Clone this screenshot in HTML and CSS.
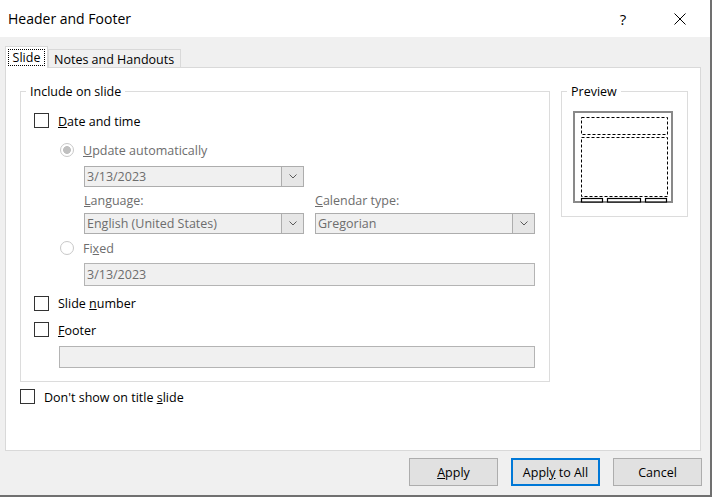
FILE: index.html
```html
<!DOCTYPE html>
<html>
<head>
<meta charset="utf-8">
<title>Header and Footer</title>
<link rel="stylesheet" href="styles.css">
</head>
<body>
<div class="window">
  <div class="titlebar">
    <span class="title">Header and Footer</span>
    <span class="help">?</span>
    <svg class="close" width="12" height="12" viewBox="0 0 12 12"><path d="M0.5 0.5 L11.5 11.5 M11.5 0.5 L0.5 11.5" stroke="#000" stroke-width="1" fill="none"/></svg>
  </div>
  <div class="client">
    <div class="tabs">
      <div class="tab active"><span class="focus">Slide</span></div>
      <div class="tab">Notes and Handouts</div>
    </div>
    <div class="panel">
      <div class="main">
        <div class="group include">
          <span class="legend">Include on slide</span>
          <div class="row r-date"><span class="check"></span><span class="lbl"><u>D</u>ate and time</span></div>
          <div class="row r-update dis"><span class="radio on"></span><span class="lbl"><u>U</u>pdate automatically</span></div>
          <div class="combo combo1"><span class="val">3/13/2023</span><span class="btn"><svg width="8" height="5" viewBox="0 0 8 5"><path d="M0.5 0.5 L4 4 L7.5 0.5" stroke="#5a5a5a" fill="none"/></svg></span></div>
          <div class="row labels dis"><span class="lab-lang"><u>L</u>anguage:</span><span><u>C</u>alendar type:</span></div>
          <div class="row combos">
            <div class="combo"><span class="val">English (United States)</span><span class="btn"><svg width="8" height="5" viewBox="0 0 8 5"><path d="M0.5 0.5 L4 4 L7.5 0.5" stroke="#5a5a5a" fill="none"/></svg></span></div>
            <div class="combo"><span class="val">Gregorian</span><span class="btn"><svg width="8" height="5" viewBox="0 0 8 5"><path d="M0.5 0.5 L4 4 L7.5 0.5" stroke="#5a5a5a" fill="none"/></svg></span></div>
          </div>
          <div class="row r-fixed dis"><span class="radio"></span><span class="lbl">Fi<u>x</u>ed</span></div>
          <div class="field field-fixed">3/13/2023</div>
          <div class="row r-slidenum"><span class="check"></span><span class="lbl">Slide <u>n</u>umber</span></div>
          <div class="row r-footer"><span class="check"></span><span class="lbl"><u>F</u>ooter</span></div>
          <div class="field field-footer"></div>
        </div>
        <div class="row r-dont"><span class="check"></span><span class="lbl">Don't show on title <u>s</u>lide</span></div>
      </div>
      <div class="group preview">
        <span class="legend">Preview</span>
        <svg class="thumb" width="100" height="92" viewBox="0 0 100 92">
          <rect x="1" y="1" width="98" height="90" fill="#fff" stroke="#898989" stroke-width="2"/>
          <rect x="8.5" y="6.5" width="86" height="17" fill="none" stroke="#000" stroke-width="1" stroke-dasharray="3 2"/>
          <rect x="8.5" y="26.5" width="86" height="59" fill="none" stroke="#000" stroke-width="1" stroke-dasharray="3 2"/>
          <rect x="8.5" y="87.5" width="21" height="3.5" fill="#fff" stroke="#000" stroke-width="1.2"/>
          <rect x="34.5" y="87.5" width="33" height="3.5" fill="#fff" stroke="#000" stroke-width="1.2"/>
          <rect x="72.5" y="87.5" width="21" height="3.5" fill="#fff" stroke="#000" stroke-width="1.2"/>
        </svg>
      </div>
    </div>
    <div class="buttons">
      <div class="button"><span><u>A</u>pply</span></div>
      <div class="button default"><span>Appl<u>y</u> to All</span></div>
      <div class="button"><span>Cancel</span></div>
    </div>
  </div>
</div>
</body>
</html>
```
FILE: styles.css
```css
* { box-sizing: border-box; margin: 0; padding: 0; }
html, body { width: 712px; height: 497px; overflow: hidden; }
body {
  font-family: "Open Sans", "Noto Sans", sans-serif;
  font-size: 12.5px;
  color: #000;
  background: #fff;
}
u { text-decoration: underline; text-underline-offset: 1px; }

.window {
  width: 712px;
  height: 497px;
  border-right: 2px solid #707070;
  border-bottom: 2px solid #707070;
  display: flex;
  flex-direction: column;
}

.titlebar {
  height: 37px;
  flex: none;
  display: flex;
  align-items: center;
  padding-left: 8px;
  background: #fff;
}
.title { font-size: 14px; flex: 1; }
.help { font-size: 15px; width: 12px; text-align: center; margin-right: 45px; }
.close { margin-right: 24px; display: block; }

.client {
  flex: 1;
  background: #f0f0f0;
  padding: 9px 0 0 5px;
  display: flex;
  flex-direction: column;
}

.tabs {
  height: 21px;
  display: flex;
  align-items: flex-end;
}
.tab {
  height: 18px;
  width: 133px;
  border: 1px solid #d9d9d9;
  border-bottom: none;
  background: #f0f0f0;
  padding-left: 5px;
  line-height: 19px;
}
.tab.active {
  position: relative;
  z-index: 1;
  width: 43px;
  height: 22px;
  margin-bottom: -1px;
  background: #fff;
  padding: 2px 0 0 2px;
}
.focus {
  display: block;
  width: 37px;
  height: 17px;
  border: 1px dotted #000;
  text-align: center;
  line-height: 15px;
}

.panel {
  width: 696px;
  height: 384px;
  border: 1px solid #d9d9d9;
  background: #fff;
  display: flex;
  padding: 23px 0 0 14px;
}

.main { width: 530px; display: flex; flex-direction: column; }

.group {
  border: 1px solid #dcdcdc;
  display: flex;
  flex-direction: column;
}
.include { height: 291px; }
.preview { width: 127px; height: 126px; margin-left: 11px; }

.legend {
  align-self: flex-start;
  margin: -9px 0 0 5px;
  padding: 0 4px;
  height: 16px;
  line-height: 17px;
  background: #fff;
}

.row { display: flex; align-items: center; }
.lbl { padding-top: 1px; }
.dis { color: #6d6d6d; }

.check {
  width: 15px;
  height: 15px;
  flex: none;
  border: 1px solid #333;
  background: #fff;
  margin-right: 9px;
}
.radio {
  width: 14px;
  height: 14px;
  flex: none;
  border: 1px solid #c8c8c8;
  border-radius: 50%;
  background: #fff;
  margin-right: 9px;
}
.radio.on { background: radial-gradient(circle, #c0c0c0 0 3.6px, #fff 4.2px); }

.r-date { margin: 12px 0 0 13px; height: 19px; }
.r-update { margin: 11px 0 0 39px; height: 18px; }
.combo1 { margin: 7px 0 0 63px; }
.labels { margin: 5px 0 0 63px; height: 16px; padding-top: 1px; }
.lab-lang { width: 231px; }
.combos { margin: 5px 0 0 63px; gap: 11px; }
.r-fixed { margin: 5px 0 0 39px; height: 18px; }
.field-fixed { margin: 6px 0 0 63px; width: 451px; height: 23px; }
.r-slidenum { margin: 8px 0 0 13px; height: 18px; }
.r-footer { margin: 8px 0 0 13px; height: 19px; }
.field-footer { margin: 7px 0 0 38px; width: 476px; height: 22px; }
.r-dont { margin-top: 5px; height: 19px; }

.combo {
  width: 220px;
  height: 21px;
  display: flex;
  border: 1px solid #adadad;
  background: #f0f0f0;
  color: #6d6d6d;
}
.combo .val { flex: 1; padding-left: 2px; line-height: 20px; }
.combo .btn {
  width: 22px;
  border-left: 1px solid #adadad;
  background: #e6e6e6;
  display: flex;
  align-items: center;
  justify-content: center;
}
.combo .btn svg { display: block; }

.field {
  border: 1px solid #b4b4b4;
  background: #f0f0f0;
  color: #6d6d6d;
  padding-left: 2px;
  line-height: 22px;
}

.thumb { display: block; margin: 12px 0 0 11px; }

.buttons {
  display: flex;
  justify-content: flex-end;
  gap: 13px;
  margin-top: 7px;
  padding-right: 8px;
}
.button {
  width: 89px;
  height: 28px;
  border: 1px solid #adadad;
  background: #e1e1e1;
  display: flex;
  align-items: center;
  justify-content: center;
}
.button.default { border: 2px solid #0078d7; }
```
